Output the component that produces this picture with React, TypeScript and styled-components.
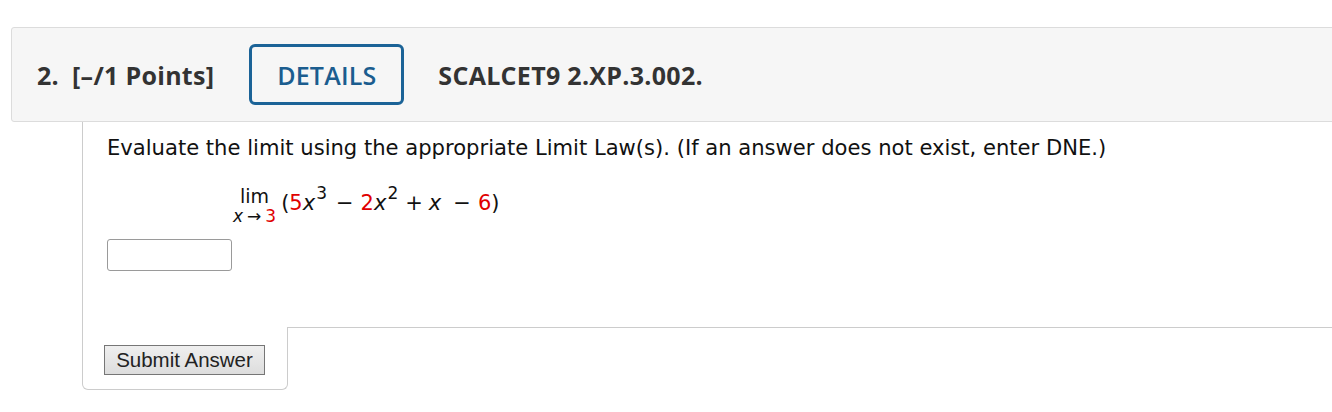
import React from "react";
import styled, { createGlobalStyle } from "styled-components";

const GlobalStyle = createGlobalStyle`
  html, body {
    margin: 0;
    padding: 0;
    background: #ffffff;
    overflow: hidden;
  }
  body {
    font-family: "DejaVu Sans", Verdana, sans-serif;
    color: #111;
  }
`;

const Page = styled.div`
  width: 1332px;
  height: 412px;
  box-sizing: border-box;
  padding: 27px 0 0 11px;
`;

const Header = styled.div`
  display: flex;
  align-items: center;
  height: 95px;
  box-sizing: border-box;
  margin-right: -8px;
  padding-left: 25px;
  background-color: #f6f6f6;
  border: 1px solid #dcdcdc;
  border-radius: 3px;
  font-family: "Open Sans", "Liberation Sans", sans-serif;
  letter-spacing: 0.3px;
  color: #333333;
`;

const Title = styled.div`
  display: flex;
  gap: 13px;
  font-size: 25px;
  font-weight: 700;
`;

const DetailsButton = styled.button`
  display: flex;
  align-items: center;
  justify-content: center;
  margin-left: 35px;
  width: 155px;
  height: 61px;
  box-sizing: border-box;
  background: transparent;
  border: 3px solid #1b6397;
  border-radius: 6px;
  color: #1b5d8f;
  font-family: "Open Sans", "Liberation Sans", sans-serif;
  font-size: 25px;
  font-weight: 600;
  letter-spacing: 0.2px;
  padding: 0;
`;

const QuestionCode = styled.div`
  margin-left: 34px;
  font-size: 25px;
  font-weight: 700;
`;

const Section = styled.div`
  margin-left: 71px;
`;

const Content = styled.div`
  border-left: 1px solid #cccccc;
  padding: 14px 0 56px 24px;
`;

const Prompt = styled.p`
  margin: 0;
  font-size: 21.1px;
  line-height: 24px;
`;

const MathRow = styled.div`
  display: flex;
  align-items: flex-start;
  margin-top: 26px;
  padding-left: 126px;
  font-size: 21px;
`;

const Lim = styled.div`
  display: inline-flex;
  flex-direction: column;
  align-items: center;
`;

const LimWord = styled.span`
  font-size: 19px;
  line-height: 20px;
`;

const LimSub = styled.span`
  margin-top: 2px;
  font-size: 17px;
  line-height: 16px;
`;

const Expr = styled.div`
  margin-left: 5px;
  padding-top: 7px;
  line-height: 20px;
`;

const Var = styled.span`
  font-style: italic;
`;

const Red = styled.span`
  color: #e00000;
`;

const Sup = styled.span`
  margin-left: 1px;
  font-size: 17px;
  vertical-align: 11px;
  line-height: 0;
`;

const Op = styled.span<{ $left?: number; $right?: number }>`
  margin: 0 ${(p) => p.$right ?? 7}px 0 ${(p) => p.$left ?? 7}px;
`;

const Arrow = styled.span`
  margin: 0 4px;
`;

const AnswerBox = styled.input`
  display: block;
  margin-top: 15px;
  width: 125px;
  height: 32px;
  box-sizing: border-box;
  border: 1px solid #9a9a9a;
  border-radius: 3px;
  background: #ffffff;
  outline: none;
`;

const Footer = styled.div`
  display: flex;
  align-items: flex-start;
  margin-right: -8px;
`;

const SubmitTab = styled.div`
  width: 206px;
  box-sizing: border-box;
  padding: 18px 0 14px 21px;
  border: 1px solid #cccccc;
  border-top: none;
  border-radius: 0 0 6px 6px;
`;

const Filler = styled.div`
  flex: 1;
  border-top: 1px solid #cccccc;
`;

const SubmitButton = styled.button`
  display: block;
  width: 161px;
  height: 30px;
  box-sizing: border-box;
  padding: 0;
  border: 1px solid #767676;
  background: linear-gradient(#efefef, #dddddd);
  color: #222222;
  font-family: "Liberation Sans", Arial, sans-serif;
  font-size: 20.5px;
`;

export default function App() {
  return (
    <>
      <GlobalStyle />
      <Page>
        <Header>
          <Title>
            <span>2.</span>
            <span>[–/1 Points]</span>
          </Title>
          <DetailsButton>DETAILS</DetailsButton>
          <QuestionCode>SCALCET9 2.XP.3.002.</QuestionCode>
        </Header>
        <Section>
          <Content>
            <Prompt>
              Evaluate the limit using the appropriate Limit Law(s). (If an answer does not exist, enter DNE.)
            </Prompt>
            <MathRow>
              <Lim>
                <LimWord>lim</LimWord>
                <LimSub>
                  <Var>x</Var>
                  <Arrow>→</Arrow>
                  <Red>3</Red>
                </LimSub>
              </Lim>
              <Expr>
                (<Red>5</Red>
                <Var>x</Var>
                <Sup>3</Sup>
                <Op $left={9}>−</Op>
                <Red>2</Red>
                <Var>x</Var>
                <Sup>2</Sup>
                <Op $left={7} $right={6}>+</Op>
                <Var>x</Var>
                <Op $left={12}>−</Op>
                <Red>6</Red>)
              </Expr>
            </MathRow>
            <AnswerBox type="text" />
          </Content>
          <Footer>
            <SubmitTab>
              <SubmitButton>Submit Answer</SubmitButton>
            </SubmitTab>
            <Filler />
          </Footer>
        </Section>
      </Page>
    </>
  );
}
